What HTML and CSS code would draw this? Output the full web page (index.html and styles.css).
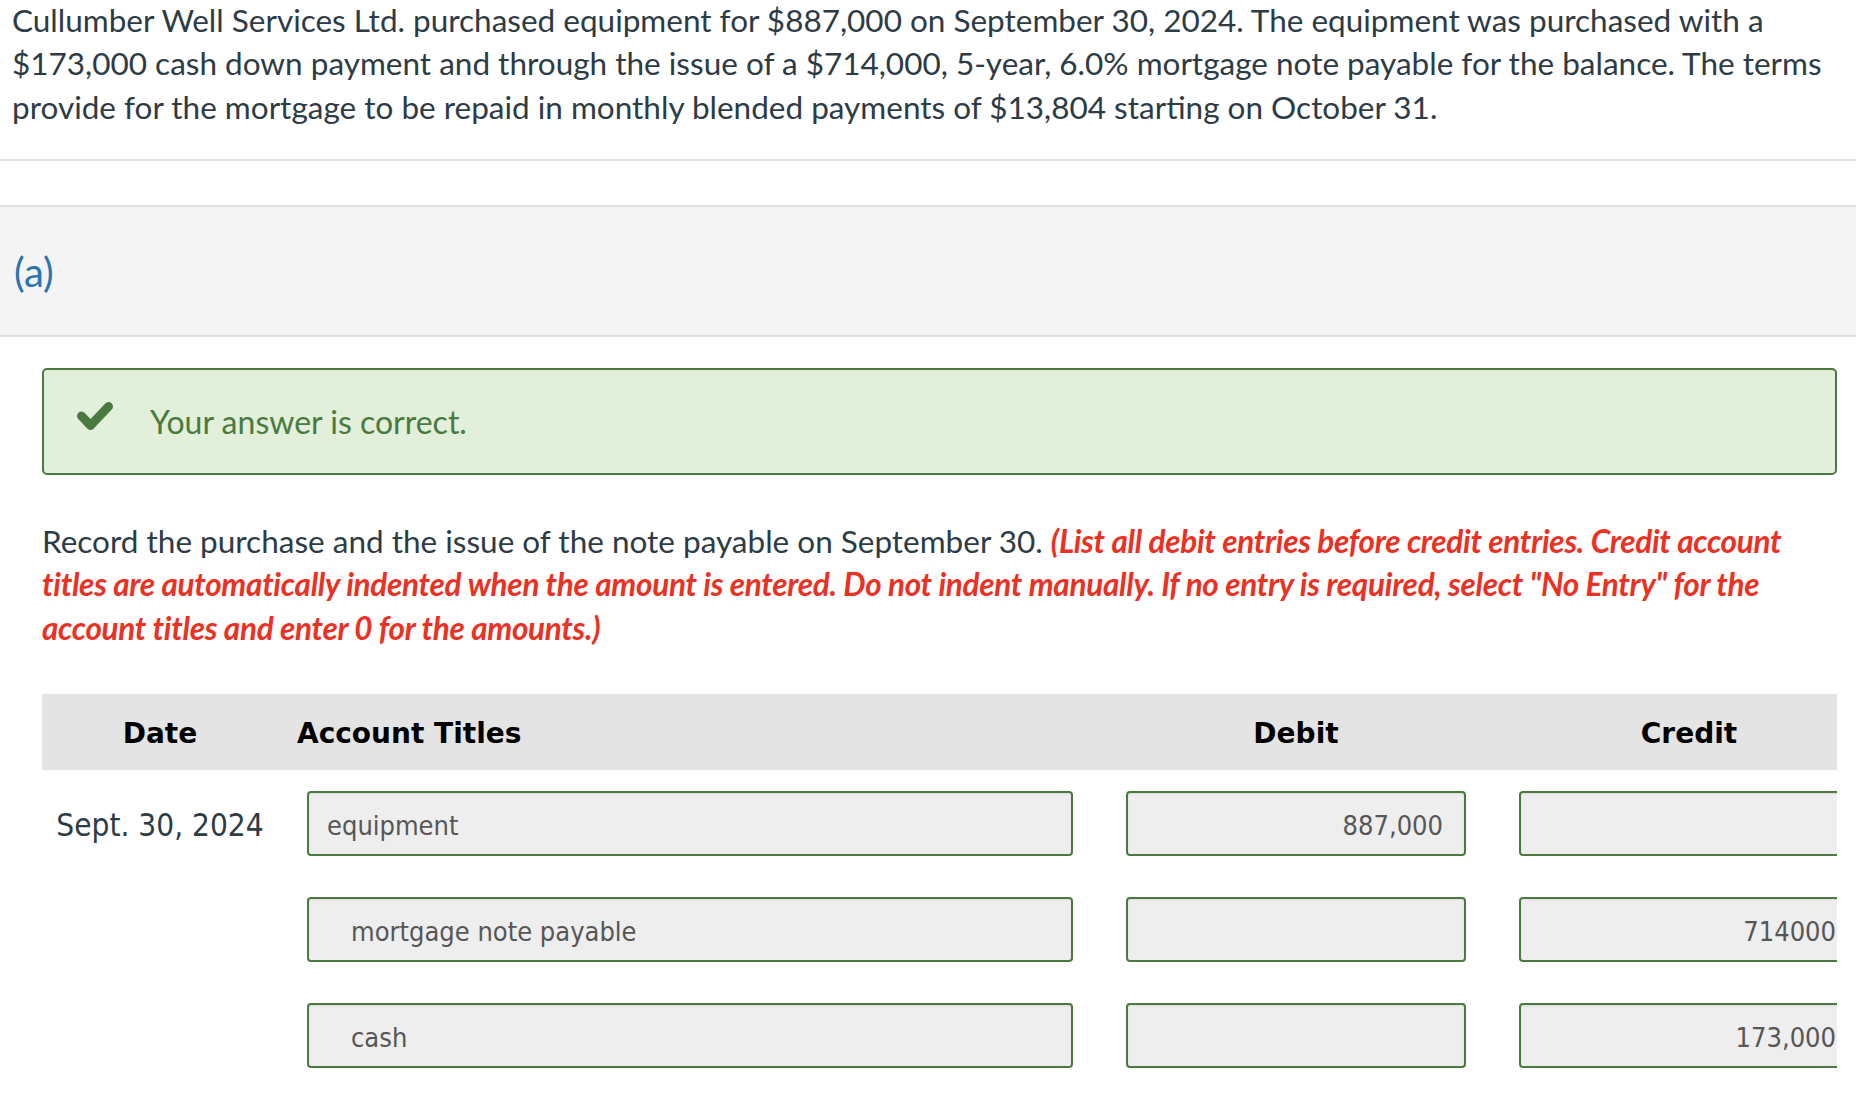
FILE: index.html
```html
<!DOCTYPE html>
<html lang="en">
<head>
<meta charset="utf-8">
<title>Question</title>
<link rel="stylesheet" href="styles.css">
</head>
<body>
<div class="problem">
  <p>Cullumber Well Services Ltd. purchased equipment for $887,000 on September 30, 2024. The equipment was purchased with a $173,000 cash down payment and through the issue of a $714,000, 5-year, 6.0% mortgage note payable for the balance. The terms provide for the mortgage to be repaid in monthly blended payments of $13,804 starting on October 31.</p>
</div>
<div class="spacer"></div>
<div class="part-head"><span class="part-label">(a)</span></div>

<div class="content">
  <div class="feedback">
    <svg class="check" width="38" height="31" viewBox="0 0 38 31" aria-hidden="true">
      <path d="M5.5 15 L14.5 24.5 L32.5 5.5" fill="none" stroke="#4a7a3f" stroke-width="9" stroke-linecap="round" stroke-linejoin="round"/>
    </svg>
    <span class="feedback-text">Your answer is correct.</span>
  </div>

  <p class="instructions">Record the purchase and the issue of the note payable on September 30. <em class="note">(List all debit entries before credit entries. Credit account titles are automatically indented when the amount is entered. Do not indent manually. If no entry is required, select "No Entry" for the account titles and enter 0 for the amounts.)</em></p>

  <div class="journal">
    <div class="jrow jhead">
      <div class="c-date">Date</div>
      <div class="c-acct">Account Titles</div>
      <div class="c-amt">Debit</div>
      <div class="c-amt">Credit</div>
    </div>
    <div class="jrow entry">
      <div class="c-date date-text">Sept. 30, 2024</div>
      <input class="field acct" type="text" value="equipment" readonly>
      <input class="field amt" type="text" value="887,000" readonly>
      <input class="field amt" type="text" value="" readonly>
    </div>
    <div class="jrow entry">
      <div class="c-date date-text"></div>
      <input class="field acct indent" type="text" value="mortgage note payable" readonly>
      <input class="field amt" type="text" value="" readonly>
      <input class="field amt" type="text" value="714000" readonly>
    </div>
    <div class="jrow entry">
      <div class="c-date date-text"></div>
      <input class="field acct indent" type="text" value="cash" readonly>
      <input class="field amt" type="text" value="" readonly>
      <input class="field amt" type="text" value="173,000" readonly>
    </div>
  </div>
</div>
</body>
</html>
```

FILE: styles.css
```css
html, body {
  margin: 0;
  padding: 0;
  background: #ffffff;
}

body {
  font-family: "Lato", "Open Sans", sans-serif;
  font-size: 31.5px;
  line-height: 43.7px;
  color: #2d3b45;
  overflow: hidden;
}

p {
  margin: 0;
}

.problem {
  padding: 0 12px 29.5px 12px;
  border-bottom: 2px solid #dedede;
}

.problem p {
  margin-top: -1.5px;
}

.spacer {
  height: 44px;
  border-bottom: 2px solid #dedede;
}

.part-head {
  background: #f4f4f4;
  height: 130px;
  box-sizing: border-box;
  padding: 43px 14px 0 14px;
  border-bottom: 2px solid #dedede;
}

.part-label {
  font-size: 40px;
  line-height: 44px;
  color: #2a75ae;
}

.content {
  padding: 31px 0 0 42px;
  width: 1795px;
}

.feedback {
  display: flex;
  align-items: flex-start;
  height: 107px;
  box-sizing: border-box;
  padding: 29.7px 30px 0 32px;
  border: 2px solid #4a7a3f;
  border-radius: 5px;
  background: #e2efda;
}

.check {
  flex: none;
  margin-top: 1px;
  margin-right: 36px;
}

.feedback-text {
  color: #4a7a3f;
  font-size: 32px;
}

.instructions {
  margin-top: 44.5px;
}

.note {
  color: #ea3124;
  font-weight: 700;
  font-style: italic;
  letter-spacing: -0.3px;
}

.journal {
  margin-top: 43.5px;
  width: 1795px;
  overflow: hidden;
}

.jrow {
  display: grid;
  grid-template-columns: 265px 819px 393px 340px;
  align-items: center;
  justify-items: start;
}

.jhead {
  height: 76px;
  background: #e4e4e4;
  font-family: "DejaVu Sans", "Verdana", sans-serif;
  font-weight: 700;
  font-size: 28px;
  line-height: 80px;
  color: #000000;
  margin-bottom: 21px;
  align-items: start;
}

.c-date {
  box-sizing: border-box;
  width: 265px;
  text-align: center;
  padding-right: 29px;
  white-space: nowrap;
}

.jhead .c-acct {
  margin-left: -10px;
}

.jhead .c-amt {
  width: 340px;
  text-align: center;
}

.entry {
  margin-bottom: 41.5px;
}

.date-text {
  font-family: "DejaVu Sans Condensed", "DejaVu Sans", sans-serif;
  font-stretch: semi-condensed;
  font-size: 31.3px;
  line-height: 40px;
  color: #2d3b45;
  padding-top: 3px;
}

.field {
  display: block;
  height: 64.5px;
  box-sizing: border-box;
  margin: 0;
  border: 2px solid #4a7a3f;
  border-radius: 4px;
  background: #eeeeee;
  box-shadow: inset 0 1px 2px rgba(0, 0, 0, 0.08);
  font-family: "DejaVu Sans Condensed", "DejaVu Sans", sans-serif;
  font-stretch: semi-condensed;
  font-size: 27px;
  line-height: 56px;
  color: #565656;
  padding: 4px 21px 0 18px;
  outline: none;
}

.field.acct {
  width: 766px;
}

.field.indent {
  padding-left: 42px;
}

.field.amt {
  width: 340px;
  text-align: right;
}
```
